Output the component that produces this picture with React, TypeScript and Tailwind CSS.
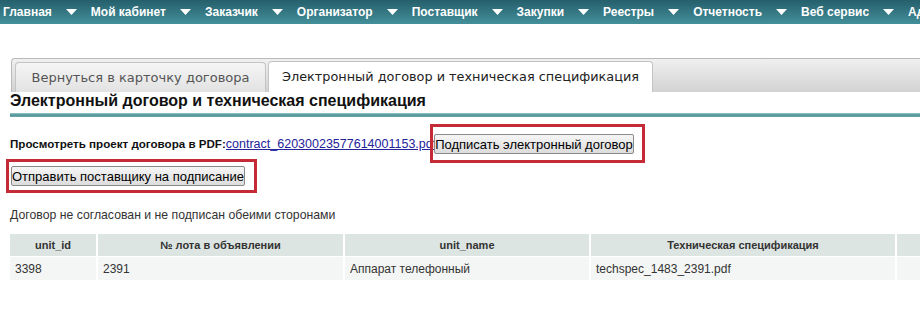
const NAV = [
  "Главная",
  "Мой кабинет",
  "Заказчик",
  "Организатор",
  "Поставщик",
  "Закупки",
  "Реестры",
  "Отчетность",
  "Веб сервис",
  "Администрирование",
];

const COLS = [
  { title: "unit_id", value: "3398" },
  { title: "№ лота в объявлении", value: "2391" },
  { title: "unit_name", value: "Аппарат телефонный" },
  { title: "Техническая спецификация", value: "techspec_1483_2391.pdf" },
  { title: "", value: "" },
];

function Caret() {
  return (
    <svg width="11" height="6" viewBox="0 0 11 6" className="shrink-0">
      <path d="M0 0 H11 L5.5 6 Z" fill="#ffffff" />
    </svg>
  );
}

export default function App() {
  return (
    <div className="relative h-[311px] w-[920px] overflow-hidden bg-white font-['Liberation_Sans',Arial,sans-serif]">
      {/* top menu */}
      <nav className="flex h-[24px] items-center gap-[14px] overflow-hidden whitespace-nowrap bg-gradient-to-b from-[#255f6c] to-[#44909a] pl-[3px] text-[12px] font-bold text-white">
        {NAV.map((item) => (
          <div key={item} className="flex shrink-0 items-center gap-[14px]">
            <span>{item}</span>
            <Caret />
          </div>
        ))}
      </nav>

      {/* tabs */}
      <div className="ml-[11px] mt-[34px] flex h-[34px] items-end rounded-tl-[4px] border-l border-t border-[#b9b9b9] bg-gradient-to-b from-[#f0f0f0] to-[#d2d2d2] pl-[3px] font-['DejaVu_Sans',Verdana,sans-serif] text-[13px]">
        <div className="flex h-[30px] w-[251px] items-center justify-center rounded-t-[4px] border border-b-0 border-[#c4c4c4] bg-gradient-to-b from-[#f5f5f5] to-[#e2e2e2] text-[#555]">
          Вернуться в карточку договора
        </div>
        <div className="ml-[2px] flex h-[31px] w-[385px] items-center justify-center rounded-t-[4px] border border-b-0 border-[#c4c4c4] bg-white text-[12.85px] text-[#222]">
          Электронный договор и техническая спецификация
        </div>
      </div>

      <h1 className="pl-[10px] text-[16px] font-bold leading-[18px] text-[#111]">
        Электронный договор и техническая спецификация
      </h1>
      <div className="ml-[10px] mt-[3px] h-[4px] bg-gradient-to-b from-[#9cc5c7] via-[#4f9497] to-[#6fa9ab]" />

      <div className="ml-[10px] mt-[17px] flex h-[20px] items-center">
        <div className="flex w-[424px] items-center overflow-hidden whitespace-nowrap">
          <span className="shrink-0 text-[11.6px] font-bold text-[#111]">
            Просмотреть проект договора в PDF:
          </span>
          <span className="min-w-0 overflow-hidden text-[12.5px] text-[#23239a] underline">
            contract_62030023577614001153.pdf
          </span>
        </div>
        <button className="h-[20px] w-[200px] rounded-[2px] border border-[#8a8a8a] bg-gradient-to-b from-[#f6f6f6] to-[#dcdcdc] text-[13px] text-black">
          Подписать электронный договор
        </button>
      </div>

      <div className="ml-[11px] mt-[12px] flex">
        <button className="h-[20px] w-[234px] rounded-[2px] border border-[#8a8a8a] bg-gradient-to-b from-[#f6f6f6] to-[#dcdcdc] text-[13px] text-black">
          Отправить поставщику на подписание
        </button>
      </div>

      <p className="ml-[10px] mt-[22px] text-[12.25px] leading-[14px] text-[#333]">
        Договор не согласован и не подписан обеими сторонами
      </p>

      <div className="ml-[10px] mt-[12px] grid w-[990px] grid-cols-[86px_245px_244px_304px_100px] gap-x-[2px] gap-y-[1px] text-[#333]">
        {COLS.map((c, i) => (
          <div
            key={"h" + i}
            className="flex h-[22px] items-center justify-center bg-[#dde5e2] text-[11px] font-bold"
          >
            {c.title}
          </div>
        ))}
        {COLS.map((c, i) => (
          <div
            key={"r" + i}
            className="flex h-[23px] items-center bg-[#f3f6f5] pl-[5px] text-[12px]"
          >
            {c.value}
          </div>
        ))}
      </div>

      {/* red annotation frames */}
      <div className="absolute left-[430px] top-[124px] h-[39px] w-[215px] border-[3px] border-[#c52b37]" />
      <div className="absolute left-[6px] top-[159px] h-[34px] w-[251px] border-[3px] border-[#c52b37]" />
    </div>
  );
}
